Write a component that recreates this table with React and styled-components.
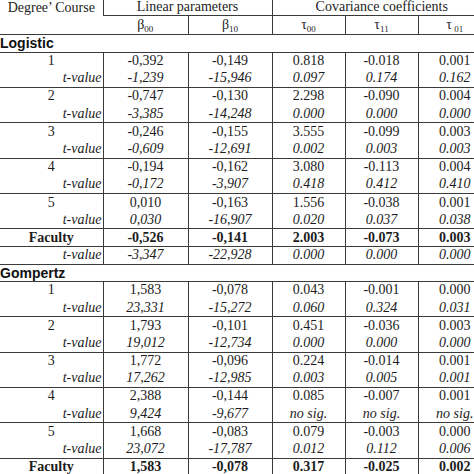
import React from 'react';
import styled, { createGlobalStyle } from 'styled-components';

const Global = createGlobalStyle`
  html, body {
    margin: 0;
    padding: 0;
    background: #ffffff;
    overflow: hidden;
  }
`;

const Page = styled.div`
  width: 474px;
  height: 474px;
  overflow: hidden;
  background: #fff;
`;

const Table = styled.table`
  border-collapse: collapse;
  table-layout: fixed;
  width: 491px;
  font-family: "Liberation Serif", "Times New Roman", serif;
  font-size: 14px;
  color: #1c1c1c;
`;

const Row = styled.tr`
  height: ${(p) => p.$h || 17.7}px;
`;

const Cell = styled.td`
  padding: 0;
  text-align: center;
  vertical-align: middle;
  white-space: nowrap;
  line-height: 1;
  font-style: ${(p) => (p.$italic ? 'italic' : 'normal')};
  font-weight: ${(p) => (p.$bold ? 'bold' : 'normal')};
  border-left: 1px solid #3a3a3a;
  border-bottom: ${(p) => (p.$line ? '1px solid #3a3a3a' : 'none')};
  &:first-child {
    border-left: none;
  }
`;

const LabelCell = styled(Cell)`
  text-align: ${(p) => (p.$right ? 'right' : 'center')};
  padding-right: ${(p) => (p.$right ? '1px' : '0')};
`;

const HeadCell = styled(Cell)`
  vertical-align: ${(p) => (p.$top ? 'top' : 'middle')};
  padding-top: ${(p) => (p.$top ? '1px' : '0')};
`;

const SectionCell = styled.td`
  padding: 0;
  font-family: "Liberation Sans", Arial, sans-serif;
  font-weight: bold;
  font-size: 14px;
  text-align: left;
  border-bottom: 1px solid #3a3a3a;
  color: #111;
`;

const Sub = styled.sub`
  font-size: 9px;
  vertical-align: -3px;
  line-height: 0;
`;

const Greek = ({ sym, sub }) => (
  <span>
    {sym}
    <Sub>{sub}</Sub>
  </span>
);

const logistic = [
  ['1', ['-0,392', '-0,149', '0.818', '-0.018', '0.001'], ['-1,239', '-15,946', '0.097', '0.174', '0.162']],
  ['2', ['-0,747', '-0,130', '2.298', '-0.090', '0.004'], ['-3,385', '-14,248', '0.000', '0.000', '0.000']],
  ['3', ['-0,246', '-0,155', '3.555', '-0.099', '0.003'], ['-0,609', '-12,691', '0.002', '0.003', '0.003']],
  ['4', ['-0,194', '-0,162', '3.080', '-0.113', '0.004'], ['-0,172', '-3,907', '0.418', '0.412', '0.410']],
  ['5', ['0,010', '-0,163', '1.556', '-0.038', '0.001'], ['0,030', '-16,907', '0.020', '0.037', '0.038']],
];
const logisticFaculty = [['-0,526', '-0,141', '2.003', '-0.073', '0.003'], ['-3,347', '-22,928', '0.000', '0.000', '0.000']];

const gompertz = [
  ['1', ['1,583', '-0,078', '0.043', '-0.001', '0.000'], ['23,331', '-15,272', '0.060', '0.324', '0.031']],
  ['2', ['1,793', '-0,101', '0.451', '-0.036', '0.003'], ['19,012', '-12,734', '0.000', '0.000', '0.000']],
  ['3', ['1,772', '-0,096', '0.224', '-0.014', '0.001'], ['17,262', '-12,985', '0.003', '0.005', '0.001']],
  ['4', ['2,388', '-0,144', '0.085', '-0.007', '0.001'], ['9,424', '-9,677', 'no sig.', 'no sig.', 'no sig.']],
  ['5', ['1,668', '-0,083', '0.079', '-0.003', '0.000'], ['23,072', '-17,787', '0.012', '0.112', '0.006']],
];
const gompertzFaculty = [['1,583', '-0,078', '0.317', '-0.025', '0.002'], null];

const Group = ({ label, values, tvalues }) => (
  <>
    <Row>
      <LabelCell>{label}</LabelCell>
      {values.map((v, i) => (
        <Cell key={i}>{v}</Cell>
      ))}
    </Row>
    <Row>
      <LabelCell $italic $right $line>t-value</LabelCell>
      {tvalues.map((v, i) => (
        <Cell key={i} $italic $line>{v}</Cell>
      ))}
    </Row>
  </>
);

const Faculty = ({ values, tvalues }) => (
  <>
    <Row>
      <LabelCell $bold $line>Faculty</LabelCell>
      {values.map((v, i) => (
        <Cell key={i} $bold $line>{v}</Cell>
      ))}
    </Row>
    {tvalues && (
      <Row>
        <LabelCell $italic $right $line>t-value</LabelCell>
        {tvalues.map((v, i) => (
          <Cell key={i} $italic $line>{v}</Cell>
        ))}
      </Row>
    )}
  </>
);

export default function App() {
  return (
    <Page>
      <Global />
      <Table>
        <colgroup>
          <col style={{ width: 103 }} />
          <col style={{ width: 85 }} />
          <col style={{ width: 84 }} />
          <col style={{ width: 73 }} />
          <col style={{ width: 73 }} />
          <col style={{ width: 73 }} />
        </colgroup>
        <tbody>
          <Row $h={15}>
            <HeadCell rowSpan={2} $top $line>Degree’ Course</HeadCell>
            <HeadCell colSpan={2} $line>Linear parameters</HeadCell>
            <HeadCell colSpan={3} $line>Covariance coefficients</HeadCell>
          </Row>
          <Row $h={19}>
            <HeadCell $line><Greek sym="β" sub="00" /></HeadCell>
            <HeadCell $line><Greek sym="β" sub="10" /></HeadCell>
            <HeadCell $line><Greek sym="τ" sub="00" /></HeadCell>
            <HeadCell $line><Greek sym="τ" sub="11" /></HeadCell>
            <HeadCell $line><Greek sym="τ" sub=" 01" /></HeadCell>
          </Row>
          <Row $h={18}>
            <SectionCell colSpan={6}>Logistic</SectionCell>
          </Row>
          {logistic.map(([l, v, t]) => (
            <Group key={l} label={l} values={v} tvalues={t} />
          ))}
          <Faculty values={logisticFaculty[0]} tvalues={logisticFaculty[1]} />
          <Row $h={17}>
            <SectionCell colSpan={6}>Gompertz</SectionCell>
          </Row>
          {gompertz.map(([l, v, t]) => (
            <Group key={l} label={l} values={v} tvalues={t} />
          ))}
          <Faculty values={gompertzFaculty[0]} tvalues={gompertzFaculty[1]} />
        </tbody>
      </Table>
    </Page>
  );
}
